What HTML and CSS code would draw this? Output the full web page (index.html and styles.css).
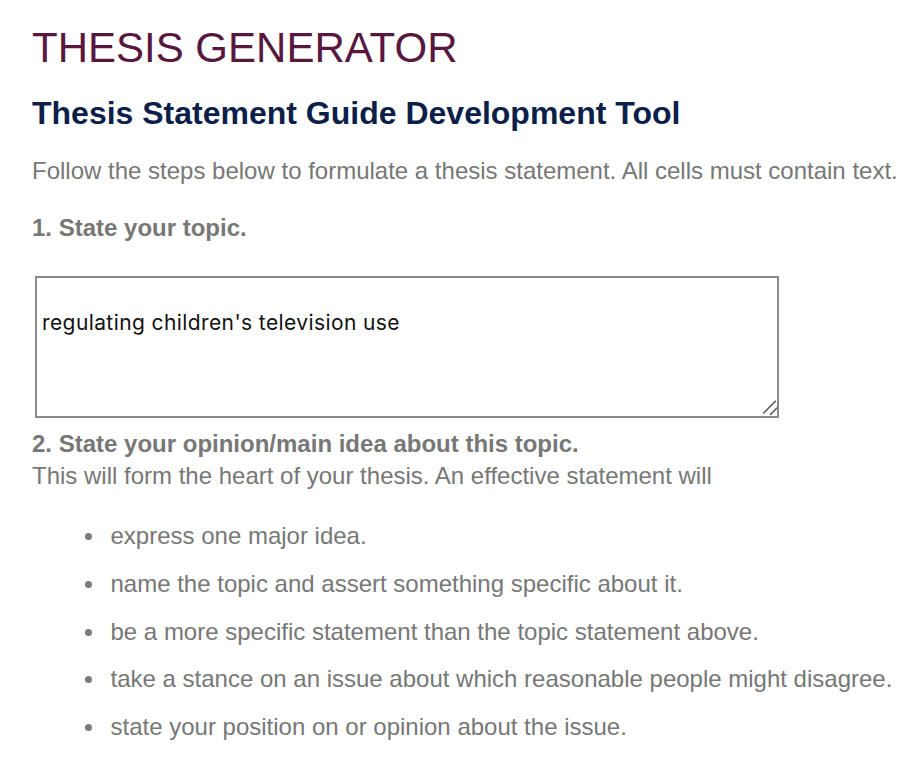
FILE: index.html
```html
<!DOCTYPE html>
<html lang="en">
<head>
<meta charset="utf-8">
<title>Thesis Generator</title>
<link rel="stylesheet" href="styles.css">
</head>
<body>
<main class="page">
  <h1 class="title">THESIS GENERATOR</h1>
  <h2 class="subtitle">Thesis Statement Guide Development Tool</h2>
  <p class="intro">Follow the steps below to formulate a thesis statement. All cells must contain text.</p>
  <p class="step step-one">1. State your topic.</p>
  <div class="topic-wrap">
    <textarea class="topic">regulating children's television use</textarea>
    <svg class="grip" width="16" height="16" viewBox="0 0 16 16" aria-hidden="true">
      <line x1="2.7" y1="13" x2="14.3" y2="1.2" stroke="#5a5a5a" stroke-width="1.6" stroke-linecap="round"/>
      <line x1="9.5" y1="14.5" x2="15.6" y2="8.2" stroke="#5a5a5a" stroke-width="1.6" stroke-linecap="round"/>
    </svg>
  </div>
  <p class="step step-two">2. State your opinion/main idea about this topic.</p>
  <p class="desc">This will form the heart of your thesis. An effective statement will</p>
  <ul class="criteria">
    <li>express one major idea.</li>
    <li>name the topic and assert something specific about it.</li>
    <li>be a more specific statement than the topic statement above.</li>
    <li>take a stance on an issue about which reasonable people might disagree.</li>
    <li>state your position on or opinion about the issue.</li>
  </ul>
</main>
</body>
</html>
```
FILE: styles.css
```css
html, body {
  margin: 0;
  padding: 0;
  background: #ffffff;
}

body {
  font-family: "Liberation Sans", Arial, sans-serif;
  color: #777777;
}

.page {
  padding: 24px 0 0 32px;
}

.title {
  margin: 0;
  font-size: 42px;
  font-weight: 400;
  line-height: 48px;
  color: #58173f;
}

.subtitle {
  margin: 21px 0 0;
  font-size: 32px;
  font-weight: 700;
  line-height: 40px;
  color: #0c1f4b;
}

.intro {
  margin: 22px 0 0;
  font-size: 24px;
  line-height: 32px;
  white-space: nowrap;
}

.step {
  margin: 0;
  font-size: 24px;
  font-weight: 700;
  line-height: 32px;
}

.step-one {
  margin-top: 24.5px;
}

.topic-wrap {
  position: relative;
  width: 744px;
  margin: 32px 0 0 3px;
}

.topic {
  display: block;
  box-sizing: border-box;
  width: 744px;
  height: 142px;
  margin: 0;
  padding: 32px 5px 4px;
  border: 2px solid #8a8a8a;
  border-radius: 0;
  font-family: Inter, "Liberation Sans", sans-serif;
  font-size: 21px;
  line-height: 26px;
  letter-spacing: 0.4px;
  color: #111111;
  background: #ffffff;
  resize: none;
  outline: none;
}

.grip {
  position: absolute;
  right: 2px;
  bottom: 2px;
  pointer-events: none;
}

.step-two {
  margin-top: 10px;
}

.desc {
  margin: 0;
  font-size: 24px;
  line-height: 32px;
}

.criteria {
  margin: 28.5px 0 0;
  padding: 0 0 0 52.5px;
  list-style: none;
  font-size: 24px;
  line-height: 32px;
}

.criteria li {
  display: flex;
  align-items: flex-start;
  margin-bottom: 15.8px;
  white-space: nowrap;
}

.criteria li::before {
  content: "";
  flex: none;
  width: 7px;
  height: 7px;
  margin: 13px 19px 0 0;
  border-radius: 50%;
  background: #7a7a7a;
}
```
